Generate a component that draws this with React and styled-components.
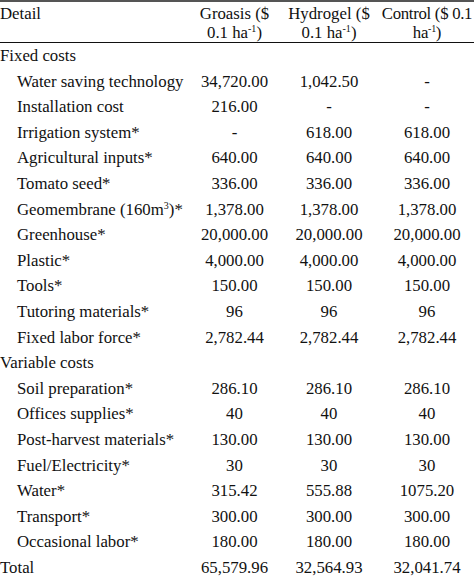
import React from 'react'
import styled, { createGlobalStyle } from 'styled-components'

const Global = createGlobalStyle`
  html, body {
    margin: 0;
    padding: 0;
    background: #fff;
  }
  body {
    font-family: "Liberation Serif", "Times New Roman", serif;
    color: #111;
  }
`

const fixedCosts = [
  ['Water saving technology', '34,720.00', '1,042.50', '-'],
  ['Installation cost', '216.00', '-', '-'],
  ['Irrigation system*', '-', '618.00', '618.00'],
  ['Agricultural inputs*', '640.00', '640.00', '640.00'],
  ['Tomato seed*', '336.00', '336.00', '336.00'],
  [<>Geomembrane (160m<sup>3</sup>)*</>, '1,378.00', '1,378.00', '1,378.00'],
  ['Greenhouse*', '20,000.00', '20,000.00', '20,000.00'],
  ['Plastic*', '4,000.00', '4,000.00', '4,000.00'],
  ['Tools*', '150.00', '150.00', '150.00'],
  ['Tutoring materials*', '96', '96', '96'],
  ['Fixed labor force*', '2,782.44', '2,782.44', '2,782.44'],
]

const variableCosts = [
  ['Soil preparation*', '286.10', '286.10', '286.10'],
  ['Offices supplies*', '40', '40', '40'],
  ['Post-harvest materials*', '130.00', '130.00', '130.00'],
  ['Fuel/Electricity*', '30', '30', '30'],
  ['Water*', '315.42', '555.88', '1075.20'],
  ['Transport*', '300.00', '300.00', '300.00'],
  ['Occasional labor*', '180.00', '180.00', '180.00'],
]

const CostRow = ({ item }) => (
  <tr>
    <Label $indent>{item[0]}</Label>
    <Value>{item[1]}</Value>
    <Value>{item[2]}</Value>
    <Value>{item[3]}</Value>
  </tr>
)

const App = () => {
  return (
    <>
      <Global />
      <Table>
        <colgroup>
          <col style={{ width: 191 }} />
          <col style={{ width: 87 }} />
          <col style={{ width: 102 }} />
          <col style={{ width: 94 }} />
        </colgroup>
        <thead>
          <tr>
            <HeadCell $left>Detail</HeadCell>
            <HeadCell>Groasis ($<br />0.1 ha<sup>-1</sup>)</HeadCell>
            <HeadCell>Hydrogel ($<br />0.1 ha<sup>-1</sup>)</HeadCell>
            <HeadCell $tight>Control ($ 0.1<br />ha<sup>-1</sup>)</HeadCell>
          </tr>
        </thead>
        <tbody>
          <tr>
            <Label colSpan={4}>Fixed costs</Label>
          </tr>
          {fixedCosts.map((item, i) => <CostRow key={i} item={item} />)}
          <tr>
            <Label colSpan={4}>Variable costs</Label>
          </tr>
          {variableCosts.map((item, i) => <CostRow key={i} item={item} />)}
          <tr>
            <Label>Total</Label>
            <Value>65,579.96</Value>
            <Value>32,564.93</Value>
            <Value>32,041.74</Value>
          </tr>
        </tbody>
      </Table>
    </>
  )
}

const Table = styled.table`
  width: 474px;
  table-layout: fixed;
  border-collapse: collapse;
  border-spacing: 0;
  font-size: 16.8px;
  color: #111;
  border-top: 2px solid #555;
  sup {
    font-size: 10px;
    line-height: 0;
    vertical-align: 6px;
  }
  thead tr {
    border-bottom: 1.5px solid #111;
  }
  tbody td {
    height: 25.6px;
    line-height: 25.6px;
    padding: 0;
    white-space: nowrap;
  }
`

const HeadCell = styled.th`
  font-weight: normal;
  text-align: ${(p) => (p.$left ? 'left' : 'center')};
  vertical-align: top;
  padding: 2px 0 0;
  line-height: 19px;
  white-space: nowrap;
  letter-spacing: ${(p) => (p.$tight ? '-0.3px' : 'normal')};
`

const Label = styled.td`
  text-align: left;
  padding-left: ${(p) => (p.$indent ? '17px' : '0')} !important;
`

const Value = styled.td`
  text-align: center;
`

export default App
